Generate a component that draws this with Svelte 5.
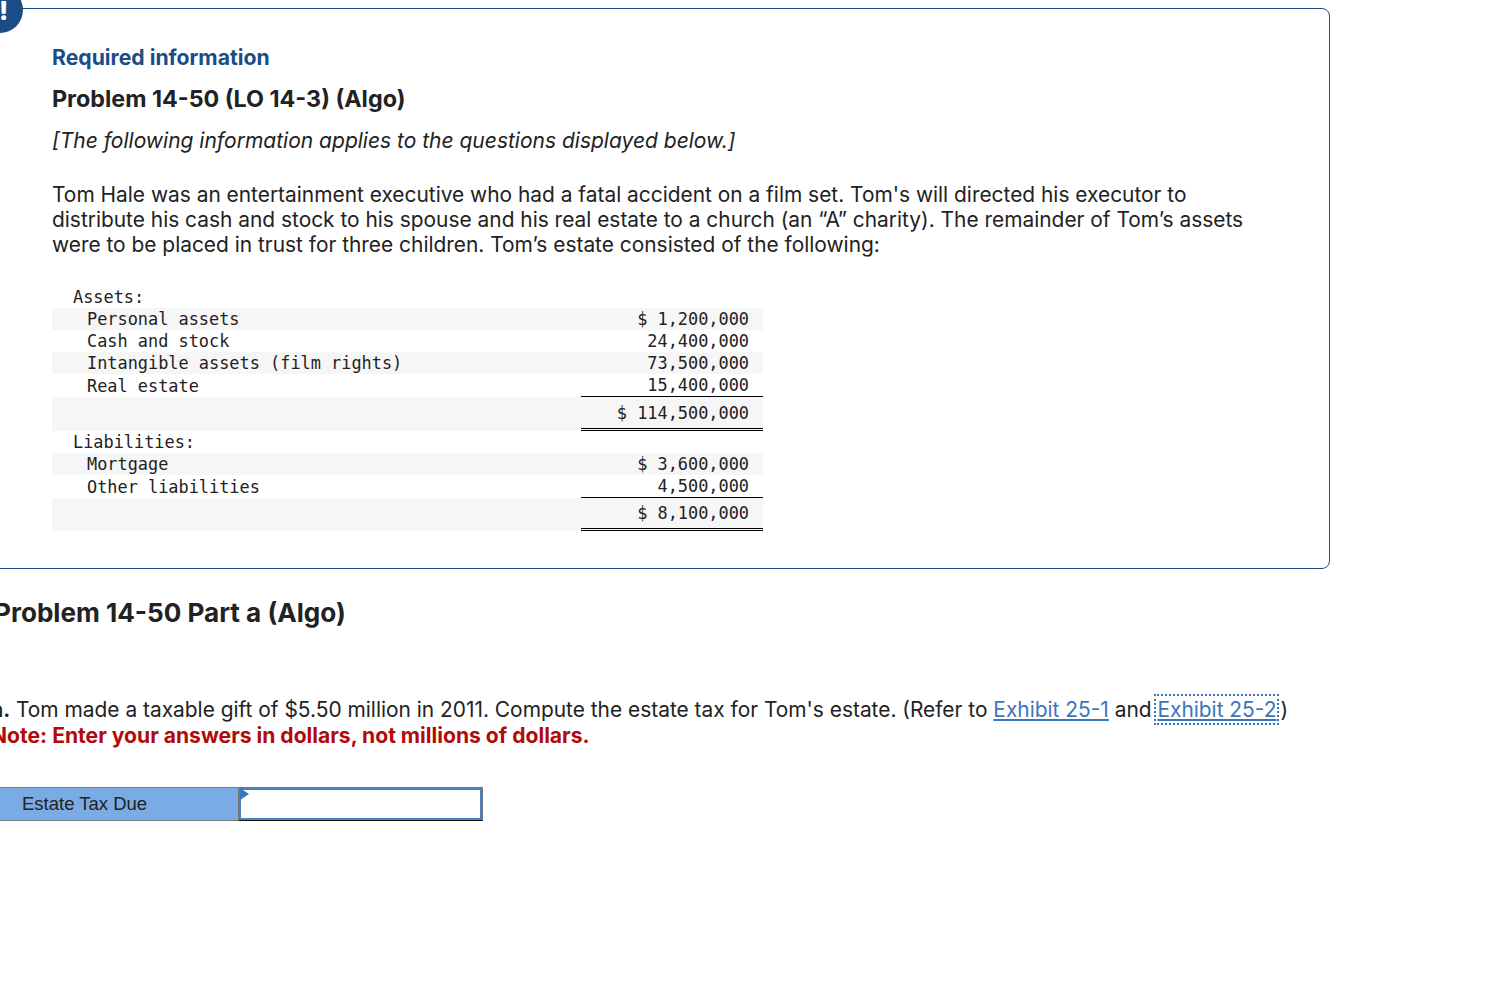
<script>
  const assets = [
    { label: 'Personal assets', value: '$ 1,200,000', shade: true },
    { label: 'Cash and stock', value: '24,400,000' },
    { label: 'Intangible assets (film rights)', value: '73,500,000', shade: true },
    { label: 'Real estate', value: '15,400,000', rule: true }
  ];
  const liabilities = [
    { label: 'Mortgage', value: '$ 3,600,000', shade: true },
    { label: 'Other liabilities', value: '4,500,000', rule: true }
  ];
</script>

<div class="page">
  <section class="card">
    <div class="badge">!</div>
    <h3 class="req">Required information</h3>
    <h2 class="prob">Problem 14-50 (LO 14-3) (Algo)</h2>
    <p class="intro">[The following information applies to the questions displayed below.]</p>
    <p class="story">Tom Hale was an entertainment executive who had a fatal accident on a film set. Tom's will directed his executor to<br />distribute his cash and stock to his spouse and his real estate to a church (an “A” charity). The remainder of Tom’s assets<br />were to be placed in trust for three children. Tom’s estate consisted of the following:</p>
    <table class="fin">
      <tbody>
        <tr><td class="head">Assets:</td><td></td></tr>
        {#each assets as r}
          <tr class:shade={r.shade}><td class="item">{r.label}</td><td class="val" class:rule={r.rule}>{r.value}</td></tr>
        {/each}
        <tr class="shade total"><td></td><td class="val dbl">$ 114,500,000</td></tr>
        <tr><td class="head">Liabilities:</td><td></td></tr>
        {#each liabilities as r}
          <tr class:shade={r.shade}><td class="item">{r.label}</td><td class="val" class:rule={r.rule}>{r.value}</td></tr>
        {/each}
        <tr class="shade total last"><td></td><td class="val dbl">$ 8,100,000</td></tr>
      </tbody>
    </table>
  </section>

  <h2 class="part">Problem 14-50 Part a (Algo)</h2>

  <p class="question"><b>a.</b> Tom made a taxable gift of $5.50 million in 2011. Compute the estate tax for Tom's estate. (Refer to <a href="#e1">Exhibit 25-1</a> and <a class="focus" href="#e2">Exhibit 25-2</a>)<br /><b class="note">Note: Enter your answers in dollars, not millions of dollars.</b></p>

  <div class="answer">
    <div class="lab">Estate Tax Due</div>
    <div class="inp"><span class="tri"></span></div>
  </div>
</div>

<style>
  :global(body) { margin: 0; background: #fff; overflow: hidden; }
  .page { margin-left: -20px; width: 1350px; height: 992px; padding-top: 8px; box-sizing: border-box; font-family: Inter, "Open Sans", sans-serif; color: #222; }
  .card { position: relative; box-sizing: border-box; height: 561px; border: 1px solid #1a4d85; border-radius: 8px; padding: 34px 0 0 71px; }
  .badge { position: absolute; left: -4px; top: -22px; width: 46px; height: 46px; box-sizing: border-box; padding-left: 22px; border-radius: 50%; background: #1a4d85; color: #fff; font-weight: 800; font-size: 26px; line-height: 48px; }
  .req { margin: 0; font-size: 21.2px; line-height: 28px; font-weight: 700; color: #1a4d85; }
  .prob { margin: 13px 0 0; font-size: 23.3px; line-height: 30px; font-weight: 700; color: #222; }
  .intro { margin: 13px 0 0; font-size: 21px; line-height: 28px; font-style: italic; }
  .story { margin: 27px 0 0; font-size: 20.9px; line-height: 25px; }
  .fin { margin-top: 29px; width: 711px; border-collapse: separate; border-spacing: 0; table-layout: fixed; font-family: "DejaVu Sans Mono", monospace; font-size: 16.9px; color: #222; }
  .fin td { padding: 0; height: 22px; line-height: 22px; box-sizing: border-box; white-space: pre; }
  .fin td:first-child { width: 529px; }
  .shade td { background: #f6f6f6; }
  .head { padding-left: 21px !important; }
  .item { padding-left: 35px !important; }
  .val { text-align: right; padding-right: 14px !important; }
  .rule { border-bottom: 1px solid #000; height: 23px !important; }
  .total td { height: 34px; }
  .total.last td { height: 33px; }
  .dbl { border-bottom: 3px double #000; }
  .part { margin: 28px 0 0 14px; font-size: 26.1px; line-height: 32px; font-weight: 700; color: #222; }
  .question { margin: 68px 0 0 11px; font-size: 20.9px; line-height: 26px; white-space: nowrap; }
  .note { color: #b20a0a; font-size: 21.1px; }
  a { color: #3a75bd; text-decoration: underline; }
  .focus { outline: 2px dotted #3a75bd; outline-offset: 1px; margin-right: 4px; }
  .answer { display: flex; margin-top: 38px; height: 34px; }
  .lab { box-sizing: border-box; width: 258px; padding-left: 42px; background: #7aabe4; border-top: 1px solid #777; border-bottom: 1px solid #777; font-family: "Liberation Sans", sans-serif; font-size: 18.5px; line-height: 32px; color: #222; }
  .inp { position: relative; box-sizing: border-box; width: 245px; background: #fff; border: 1px solid #777; border-bottom-color: #111; box-shadow: inset 0 0 0 2px #4a80c4; }
  .tri { position: absolute; left: 1px; top: 0; width: 0; height: 0; border-left: 9px solid #3a75bd; border-top: 6.5px solid transparent; border-bottom: 6.5px solid transparent; }
</style>
